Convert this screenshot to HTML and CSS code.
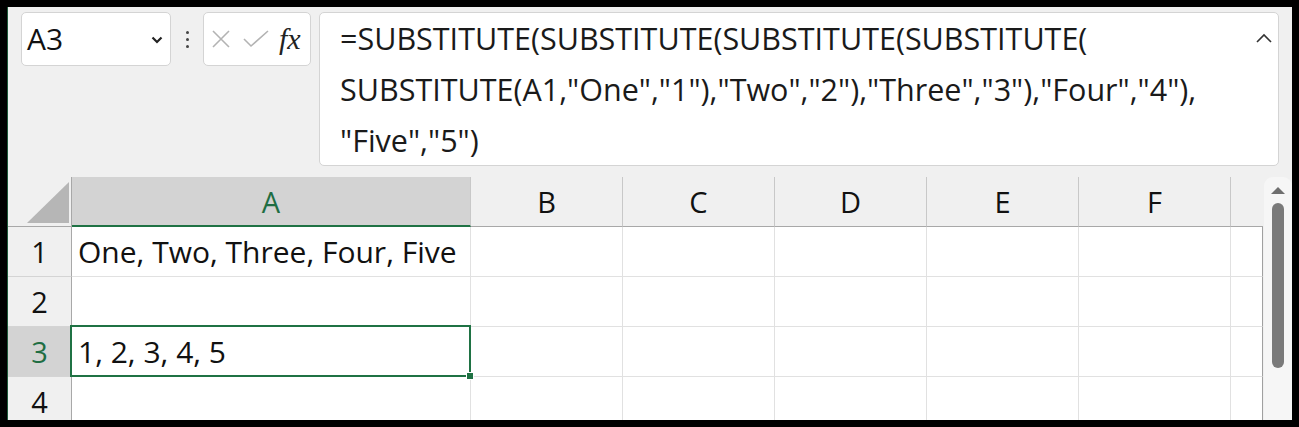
FILE: index.html
```html
<!DOCTYPE html>
<html lang="en">
<head>
    <meta charset="UTF-8">
    <meta name="viewport" content="width=device-width, initial-scale=1.0">
    <title>Formula</title>
    <link rel="stylesheet" href="styles.css">
</head>
<body>
    <div class="frame">
        <div class="topbar">
            <div class="namebox">
                <span class="name">A3</span>
                <svg class="chev" width="12" height="8" viewBox="0 0 12 8"><polyline points="1.5,1.5 6,6 10.5,1.5" fill="none" stroke="#222" stroke-width="2.2"/></svg>
            </div>
            <div class="dots"><span></span><span></span><span></span></div>
            <div class="fxbox">
                <svg width="20" height="18" viewBox="0 0 20 18"><path d="M2 1 L18 17 M18 1 L2 17" stroke="#b3b3b3" stroke-width="1.6" fill="none"/></svg>
                <svg width="26" height="18" viewBox="0 0 26 18"><polyline points="1,9 8,16 25,1" stroke="#b3b3b3" stroke-width="1.6" fill="none"/></svg>
                <span class="fx">fx</span>
            </div>
            <div class="formula">
                <div class="ftext">
                    <div>=SUBSTITUTE(SUBSTITUTE(SUBSTITUTE(SUBSTITUTE(</div>
                    <div>SUBSTITUTE(A1,"One","1"),"Two","2"),"Three","3"),"Four","4"),</div>
                    <div>"Five","5")</div>
                </div>
                <svg class="collapse" width="16" height="10" viewBox="0 0 16 10"><polyline points="1,9 8,2 15,9" fill="none" stroke="#333" stroke-width="1.6"/></svg>
            </div>
        </div>

        <div class="sheet">
            <div class="grid">
                <!-- header row -->
                <div class="corner"><div class="tri"></div></div>
                <div class="colhead active">A</div>
                <div class="colhead">B</div>
                <div class="colhead">C</div>
                <div class="colhead">D</div>
                <div class="colhead">E</div>
                <div class="colhead">F</div>
                <div class="colhead last"></div>

                <div class="rowhead">1</div>
                <div class="cell">One, Two, Three, Four, Five</div>
                <div class="cell"></div><div class="cell"></div><div class="cell"></div><div class="cell"></div><div class="cell"></div>
                <div class="cell last"></div>

                <div class="rowhead">2</div>
                <div class="cell"></div>
                <div class="cell"></div><div class="cell"></div><div class="cell"></div><div class="cell"></div><div class="cell"></div>
                <div class="cell last"></div>

                <div class="rowhead active">3</div>
                <div class="cell selected">1, 2, 3, 4, 5<div class="handle"></div></div>
                <div class="cell"></div><div class="cell"></div><div class="cell"></div><div class="cell"></div><div class="cell"></div>
                <div class="cell last"></div>

                <div class="rowhead">4</div>
                <div class="cell"></div>
                <div class="cell"></div><div class="cell"></div><div class="cell"></div><div class="cell"></div><div class="cell"></div>
                <div class="cell last"></div>
            </div>
            <div class="scrollbar">
                <div class="arrow"></div>
                <div class="thumb"></div>
            </div>
        </div>
    </div>
</body>
</html>
```

FILE: styles.css
```css
body{
    margin: 0;
    background: #000;
}

.frame{
    margin: 7px;
    height: 413px;
    background: #f0f0f0;
    overflow: hidden;
    font-family: 'Open Sans', 'Noto Sans', sans-serif;
    color: #111;
    border-left: 1px solid #1e5a3a;
    box-sizing: border-box;
}

/* formula bar */
.topbar{
    display: flex;
    align-items: flex-start;
    padding: 5px 13px 0 13px;
    height: 165px;
    box-sizing: border-box;
}

.namebox{
    width: 150px;
    height: 54px;
    box-sizing: border-box;
    background: #fff;
    border: 1px solid #d4d4d4;
    border-radius: 5px;
    display: flex;
    align-items: center;
    justify-content: space-between;
    padding: 0 7px 0 5px;
}
.name{
    font-size: 30px;
    line-height: 54px;
}
.chev{
    margin-top: 2px;
}

.dots{
    width: 32px;
    height: 54px;
    display: flex;
    flex-direction: column;
    align-items: center;
    justify-content: center;
    gap: 4px;
}
.dots span{
    width: 3px;
    height: 3px;
    background: #444;
    border-radius: 50%;
}

.fxbox{
    width: 108px;
    height: 54px;
    box-sizing: border-box;
    background: #fff;
    border: 1px solid #d4d4d4;
    border-radius: 5px;
    display: flex;
    align-items: center;
    gap: 12px;
    padding-left: 7px;
}
.fx{
    font-family: 'Liberation Serif', serif;
    font-style: italic;
    font-size: 30px;
    color: #222;
    margin-left: -2px;
}

.formula{
    flex: 1;
    margin-left: 8px;
    height: 154px;
    box-sizing: border-box;
    background: #fff;
    border: 1px solid #d4d4d4;
    border-radius: 5px;
    display: flex;
    justify-content: space-between;
    padding: 0 6px 0 20px;
}
.ftext{
    font-size: 30.5px;
    line-height: 51px;
    white-space: nowrap;
    color: #1a1a1a;
}
.collapse{
    margin-top: 20px;
    margin-right: 0;
}

/* sheet */
.sheet{
    display: flex;
    margin-top: 5px;
}

.grid{
    display: grid;
    grid-template-columns: 64px 399px 152px 152px 152px 152px 152px 32px;
    grid-template-rows: 50px 50px 50px 50px 50px;
}

.corner{
    border-right: 1px solid #a8a8a8;
    border-bottom: 1px solid #a8a8a8;
    position: relative;
}
.tri{
    position: absolute;
    right: 2px;
    bottom: 3px;
    width: 0;
    height: 0;
    border-left: 42px solid transparent;
    border-bottom: 41px solid #b6b6b6;
}

.colhead{
    font-size: 29px;
    line-height: 50px;
    text-align: center;
    border-right: 1px solid #c8c8c8;
    border-bottom: 1px solid #a8a8a8;
}
.colhead.active{
    background: #d3d3d3;
    color: #1f6e43;
    border-bottom: 2px solid #1f7244;
}
.colhead.last{
    border-right: none;
}

.rowhead{
    font-size: 29px;
    line-height: 50px;
    text-align: center;
    border-right: 1px solid #a8a8a8;
    border-bottom: 1px solid #d4d4d4;
}
.rowhead.active{
    background: #d3d3d3;
    color: #1f6e43;
}

.cell{
    background: #fff;
    border-right: 1px solid #e1e1e1;
    border-bottom: 1px solid #e1e1e1;
    font-size: 30px;
    line-height: 50px;
    padding-left: 6px;
    white-space: nowrap;
    overflow: visible;
}
.cell.last{
    border-right: 1px solid #a0a0a0;
}
.cell.selected{
    position: relative;
}
.cell.selected::after{
    content: "";
    position: absolute;
    left: -2px;
    top: -2px;
    right: -1px;
    bottom: -1px;
    border: 2px solid #1f7244;
}
.handle{
    position: absolute;
    right: -4px;
    bottom: -4px;
    width: 6px;
    height: 6px;
    background: #1f7244;
    border: 1px solid #fff;
    z-index: 2;
}

.scrollbar{
    width: 28px;
    margin-left: 1px;
    height: 250px;
    background: #f6f6f6;
    border-radius: 9px 9px 0 0;
    display: flex;
    flex-direction: column;
    align-items: center;
}
.arrow{
    margin-top: 10px;
    width: 0;
    height: 0;
    border-left: 7px solid transparent;
    border-right: 7px solid transparent;
    border-bottom: 7px solid #6f6f6f;
}
.thumb{
    margin-top: 9px;
    width: 12px;
    height: 165px;
    background: #7a7a7a;
    border-radius: 6px;
}
```
